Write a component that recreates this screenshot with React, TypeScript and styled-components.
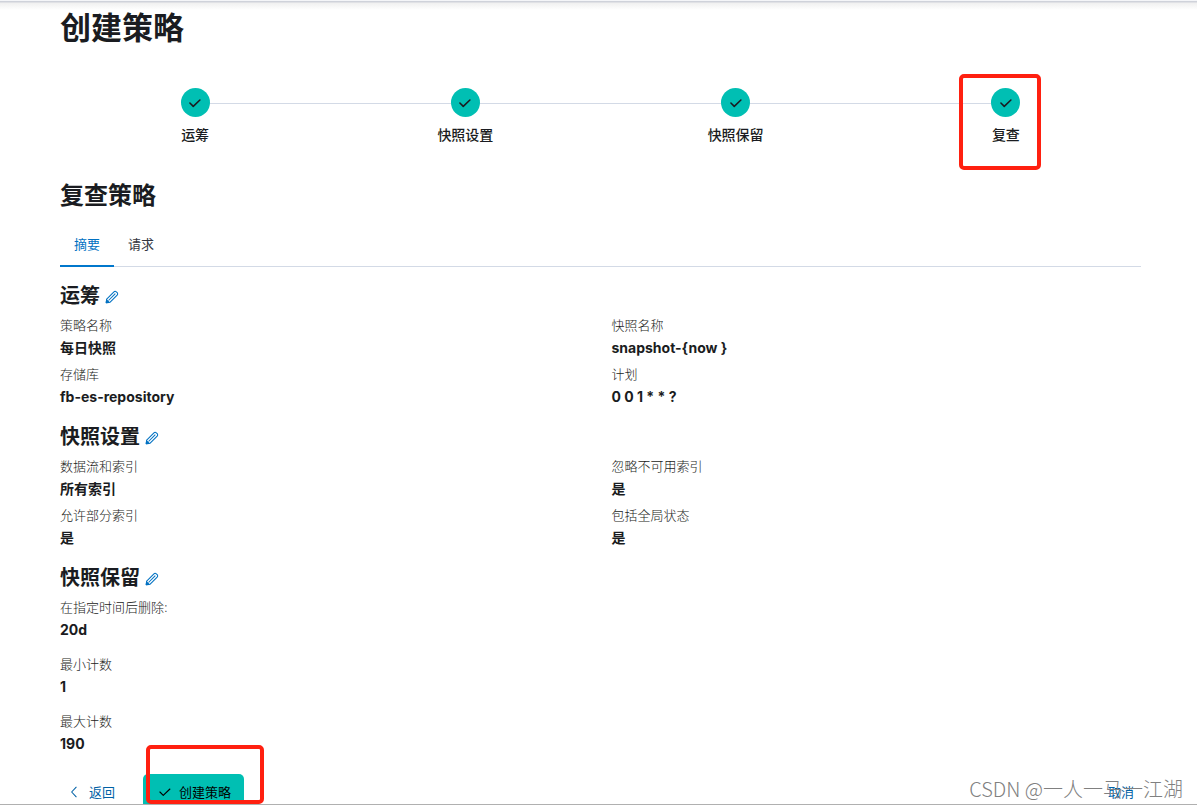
import React from "react";
import styled, { createGlobalStyle } from "styled-components";

const GlobalStyle = createGlobalStyle`
  *, *::before, *::after { box-sizing: border-box; }
  body {
    margin: 0;
    background: #fff;
    color: #1a1c21;
    font-family: Inter, "Noto Sans CJK SC", sans-serif;
    font-size: 13px;
    line-height: 22px;
  }
  h1, h2, h3, dl, dd, ol { margin: 0; padding: 0; }
  button { font: inherit; border: 0; background: none; padding: 0; color: inherit; cursor: pointer; }
`;

const Frame = styled.div`
  position: relative;
  height: calc(100vh - 4px);
  overflow: hidden;
  border-bottom: 1px solid #b0b0b0;
`;

const TopShadow = styled.div`
  height: 10px;
  border-top: 1px solid #f4f5f8;
  background: linear-gradient(#cfd2da 0 1px, #e0e1e5 1px 2px, #f0f0f0 2px, #fff);
`;

const Page = styled.main`
  padding: 0 56px 0 60px;
`;

const Title = styled.h1`
  font-size: 31px;
  line-height: 36px;
  font-weight: 700;
`;

const Steps = styled.ol`
  display: grid;
  grid-template-columns: repeat(4, 1fr);
  margin-top: 42px;
  list-style: none;
`;

const Step = styled.li`
  position: relative;
  display: flex;
  justify-content: center;

  &:not(:first-child)::before,
  &:not(:last-child)::after {
    content: "";
    position: absolute;
    top: 15px;
    width: 50%;
    height: 1px;
    background: #d3dae6;
  }
  &::before { left: 0; }
  &::after { right: 0; }
`;

const StepButton = styled.button`
  position: relative;
  z-index: 1;
  display: flex;
  flex-direction: column;
  align-items: center;
  gap: 7px;
  font-size: 14px;
  font-weight: 500;
`;

const StepCircle = styled.span`
  display: flex;
  align-items: center;
  justify-content: center;
  width: 29px;
  height: 29px;
  border-radius: 50%;
  background: #00bfb3;
`;

const Highlight = styled.span<{ $inset: string }>`
  position: absolute;
  z-index: 2;
  inset: ${(p) => p.$inset};
  border: 4px solid #ff2010;
  border-radius: 5px;
  pointer-events: none;
`;

const Subtitle = styled.h2`
  margin-top: 34px;
  font-size: 24px;
  line-height: 32px;
  font-weight: 700;
`;

const Tabs = styled.div`
  display: flex;
  margin-top: 10px;
  border-bottom: 1px solid #d3dae6;
`;

const Tab = styled.button<{ $active?: boolean }>`
  height: 45px;
  margin-bottom: -1px;
  padding: 0 14px 2px;
  color: ${(p) => (p.$active ? "#0071c2" : "#343741")};
  box-shadow: ${(p) => (p.$active ? "inset 0 -2px #0077cc" : "none")};
`;

const Section = styled.section`
  margin-top: 14px;
`;

const SectionHead = styled.div`
  display: flex;
  align-items: center;
  gap: 5px;
  margin-bottom: 4px;
`;

const SectionTitle = styled.h3`
  font-size: 20px;
  line-height: 30px;
  font-weight: 700;
`;

const EditButton = styled.button`
  display: flex;
  padding-top: 2px;
  color: #0071c2;
`;

const Details = styled.dl<{ $columns: number; $gap: number }>`
  display: grid;
  grid-template-columns: repeat(${(p) => p.$columns}, 1fr);
  gap: ${(p) => p.$gap}px 22px;
`;

const Term = styled.dt`
  margin-bottom: 2px;
  color: #1a1c21;
  font-weight: 300;
  line-height: 20px;
`;

const Value = styled.dd`
  font-size: 14px;
  font-weight: 700;
`;

const Actions = styled.div`
  display: flex;
  align-items: center;
  margin-top: 19px;
`;

const TextButton = styled.button`
  display: flex;
  align-items: center;
  gap: 8px;
  height: 36px;
  padding: 0 7px;
  color: #0061a6;
`;

const Primary = styled.button`
  position: relative;
  display: flex;
  align-items: center;
  gap: 7px;
  height: 36px;
  margin-left: 21px;
  padding: 0 13px 0 15px;
  border-radius: 5px;
  background: #00bfb3;
  color: #000;
`;

const Spacer = styled.div`
  flex: 1;
`;

const Watermark = styled.div`
  position: absolute;
  right: 14px;
  bottom: 0;
  color: #808080;
  font-family: "Noto Sans CJK SC", sans-serif;
  font-size: 20px;
  font-weight: 300;
  line-height: 30px;
`;

const Check = ({ weight = 1.3 }: { weight?: number }) => (
  <svg width="14" height="14" viewBox="0 0 16 16" fill="none" stroke="currentColor" strokeWidth={weight} strokeLinecap="round" strokeLinejoin="round" aria-hidden="true">
    <path d="M2.2 8 6 11.8l7.6-7.2" />
  </svg>
);

const ChevronLeft = () => (
  <svg width="14" height="14" viewBox="0 0 16 16" fill="none" stroke="currentColor" strokeWidth="1.2" strokeLinecap="round" strokeLinejoin="round" aria-hidden="true">
    <path d="M10.5 2.5 5.3 8l5.2 5.5" />
  </svg>
);

const Pencil = () => (
  <svg width="14" height="14" viewBox="0 0 16 16" fill="none" stroke="currentColor" strokeWidth="1.2" strokeLinejoin="round" aria-hidden="true">
    <path d="M1.4 14.6 1.9 10.4 10.2 2.1a1.9 1.9 0 0 1 2.7 0l1 1a1.9 1.9 0 0 1 0 2.7L5.6 14.1z" />
    <path d="M4 12 11.8 4.2" />
    <path d="M1.4 14.6 1.8 11.2 4.8 14.2z" fill="currentColor" />
  </svg>
);

type Item = [string, string];
type Group = { title: string; columns: number; gap: number; items: Item[] };

const groups: Group[] = [
  {
    title: "运筹",
    columns: 2,
    gap: 5,
    items: [
      ["策略名称", "每日快照"],
      ["快照名称", "snapshot-{now }"],
      ["存储库", "fb-es-repository"],
      ["计划", "0 0 1 * * ?"],
    ],
  },
  {
    title: "快照设置",
    columns: 2,
    gap: 5,
    items: [
      ["数据流和索引", "所有索引"],
      ["忽略不可用索引", "是"],
      ["允许部分索引", "是"],
      ["包括全局状态", "是"],
    ],
  },
  {
    title: "快照保留",
    columns: 1,
    gap: 13,
    items: [
      ["在指定时间后删除:", "20d"],
      ["最小计数", "1"],
      ["最大计数", "190"],
    ],
  },
];

const steps = ["运筹", "快照设置", "快照保留", "复查"];

export default function App() {
  return (
    <Frame lang="zh-CN">
      <GlobalStyle />
      <TopShadow />
      <Page>
        <Title>创建策略</Title>
        <Steps>
          {steps.map((label, i) => (
            <Step key={label}>
              <StepButton type="button">
                <StepCircle>
                  <Check weight={1.8} />
                </StepCircle>
                {label}
                {i === steps.length - 1 && <Highlight $inset="-14px -21px -24px -32px" />}
              </StepButton>
            </Step>
          ))}
        </Steps>
        <Subtitle>复查策略</Subtitle>
        <Tabs role="tablist">
          <Tab type="button" role="tab" aria-selected="true" $active>
            摘要
          </Tab>
          <Tab type="button" role="tab" aria-selected="false">
            请求
          </Tab>
        </Tabs>
        {groups.map((g) => (
          <Section key={g.title}>
            <SectionHead>
              <SectionTitle>{g.title}</SectionTitle>
              <EditButton type="button" aria-label={`编辑${g.title}`}>
                <Pencil />
              </EditButton>
            </SectionHead>
            <Details $columns={g.columns} $gap={g.gap}>
              {g.items.map(([term, value]) => (
                <div key={term}>
                  <Term>{term}</Term>
                  <Value>{value}</Value>
                </div>
              ))}
            </Details>
          </Section>
        ))}
        <Actions>
          <TextButton type="button">
            <ChevronLeft />
            返回
          </TextButton>
          <Primary type="button">
            <Check />
            创建策略
            <Highlight $inset="-29px -20px 6px 3px" />
          </Primary>
          <Spacer />
          <TextButton type="button">取消</TextButton>
        </Actions>
      </Page>
      <Watermark>CSDN @一人一马一江湖</Watermark>
    </Frame>
  );
}
